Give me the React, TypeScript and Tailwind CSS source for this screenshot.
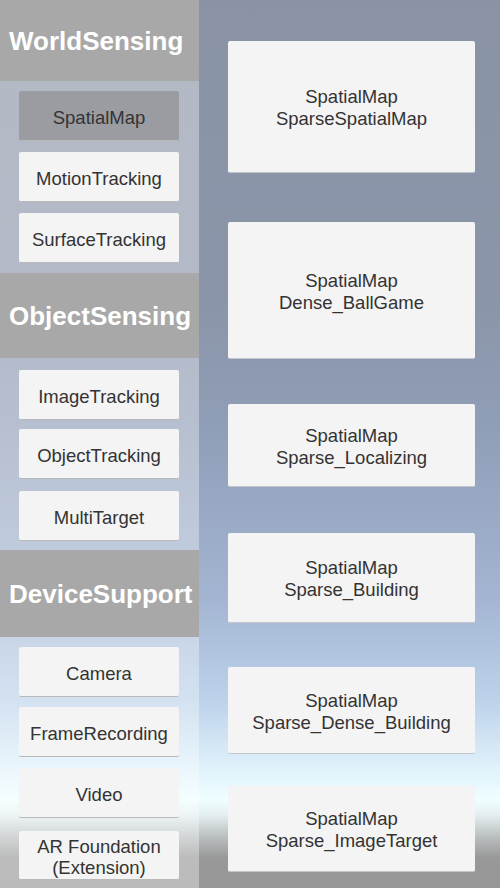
import React from "react";

const font = { fontFamily: '"Liberation Sans", Arial, sans-serif' };

type Section = {
  title: string;
  headerClass: string;
  bodyClass: string;
  items: { label: string; cls: string; selected?: boolean }[];
};

const sections: Section[] = [
  {
    title: "WorldSensing",
    headerClass: "h-[81px]",
    bodyClass: "h-[192px] pt-[10px]",
    items: [
      { label: "SpatialMap", cls: "h-[50px]", selected: true },
      { label: "MotionTracking", cls: "h-[50px] mt-[11px]" },
      { label: "SurfaceTracking", cls: "h-[50px] mt-[11px]" },
    ],
  },
  {
    title: "ObjectSensing",
    headerClass: "h-[85px]",
    bodyClass: "h-[192px] pt-[12px]",
    items: [
      { label: "ImageTracking", cls: "h-[50px]" },
      { label: "ObjectTracking", cls: "h-[50px] mt-[9px]" },
      { label: "MultiTarget", cls: "h-[50px] mt-[12px]" },
    ],
  },
  {
    title: "DeviceSupport",
    headerClass: "h-[87px]",
    bodyClass: "flex-1 pt-[10px]",
    items: [
      { label: "Camera", cls: "h-[50px]" },
      { label: "FrameRecording", cls: "h-[50px] mt-[10px]" },
      { label: "Video", cls: "h-[50px] mt-[11px]" },
      { label: "AR Foundation\n(Extension)", cls: "h-[49px] mt-[13px]" },
    ],
  },
];

const scenes = [
  { name: "SparseSpatialMap", cls: "h-[132px] mt-[41px]" },
  { name: "Dense_BallGame", cls: "h-[137px] mt-[49px]" },
  { name: "Sparse_Localizing", cls: "h-[83px] mt-[45px]" },
  { name: "Sparse_Building", cls: "h-[90px] mt-[46px]" },
  { name: "Sparse_Dense_Building", cls: "h-[87px] mt-[44px]" },
  { name: "Sparse_ImageTarget", cls: "h-[86px] mt-[32px]" },
];

export default function App() {
  return (
    <div
      style={font}
      className="w-[500px] h-[888px] overflow-hidden flex bg-[linear-gradient(to_bottom,#8a93a6_0px,#8b95a9_300px,#8f9db6_420px,#a3b5d2_600px,#bcd2ea_700px,#e0f2fb_770px,#effeff_800px,#e4eef0_815px,#b8bcbd_838px,#989898_858px,#979797_888px)]"
    >
      {/* Left menu */}
      <div className="w-[199px] h-full flex flex-col bg-white/35">
        {sections.map((s) => (
          <div key={s.title} className="flex flex-col">
            <div
              className={`${s.headerClass} bg-[#a8a8a8] flex items-center pl-[9px] pt-[1px]`}
            >
              <span className="text-white font-bold text-[26px] leading-none">
                {s.title}
              </span>
            </div>
            <div className={`${s.bodyClass} flex flex-col items-start pl-[19px]`}>
              {s.items.map((item) => (
                <button
                  key={item.label}
                  className={`${item.cls} w-[160px] pt-[3px] rounded-[2px] border-b border-[#b9b9b9] flex items-center justify-center whitespace-pre-line text-center text-[18.5px] leading-[21px] text-[#333333] ${
                    item.selected ? "bg-[#9b9ca1]" : "bg-[#f4f4f4]"
                  }`}
                >
                  {item.label}
                </button>
              ))}
            </div>
          </div>
        ))}
      </div>

      {/* Scene list */}
      <div className="flex-1 flex flex-col pl-[29px]">
        {scenes.map((sc) => (
          <button
            key={sc.name}
            className={`${sc.cls} w-[247px] pt-[3px] rounded-[2px] bg-[#f4f4f4] border-b border-[#c4c6cc] flex flex-col items-center justify-center text-[18.5px] leading-[22px] text-[#333333]`}
          >
            <span>SpatialMap</span>
            <span>{sc.name}</span>
          </button>
        ))}
      </div>
    </div>
  );
}
